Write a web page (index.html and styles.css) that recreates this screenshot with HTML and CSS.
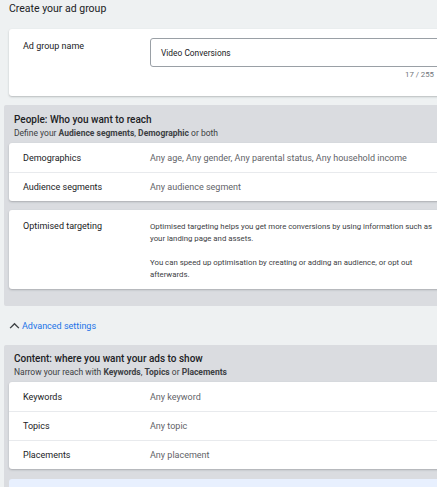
FILE: index.html
```html
<!DOCTYPE html>
<html>
<head>
<meta charset="utf-8">
<link rel="stylesheet" href="styles.css">
</head>
<body>
<div class="page">
  <h1 class="page-title">Create your ad group</h1>

  <div class="card name-card">
    <div class="label">Ad group name</div>
    <div class="field">
      <div class="input">Video Conversions</div>
      <div class="counter">17 / 255</div>
    </div>
  </div>

  <section class="panel people">
    <h2 class="panel-title">People: Who you want to reach</h2>
    <p class="panel-sub">Define your <b>Audience segments</b>, <b>Demographic</b> or both</p>
    <div class="card list">
      <div class="row"><div class="label">Demographics</div><div class="value">Any age, Any gender, Any parental status, Any household income</div></div>
      <div class="row"><div class="label">Audience segments</div><div class="value">Any audience segment</div></div>
    </div>
    <div class="card opt">
      <div class="label">Optimised targeting</div>
      <div class="desc">
        <p>Optimised targeting helps you get more conversions by using information such as your landing page and assets.</p>
        <p>You can speed up optimisation by creating or adding an audience, or opt out afterwards.</p>
      </div>
    </div>
  </section>

  <div class="advanced">
    <svg class="chev" viewBox="0 0 12 8" width="11" height="7"><path d="M1 7 L6 2 L11 7" fill="none" stroke="#3c4043" stroke-width="1.6"/></svg>
    <span>Advanced settings</span>
  </div>

  <section class="panel content">
    <h2 class="panel-title">Content: where you want your ads to show</h2>
    <p class="panel-sub">Narrow your reach with <b>Keywords</b>, <b>Topics</b> or <b>Placements</b></p>
    <div class="card list">
      <div class="row"><div class="label">Keywords</div><div class="value">Any keyword</div></div>
      <div class="row"><div class="label">Topics</div><div class="value">Any topic</div></div>
      <div class="row"><div class="label">Placements</div><div class="value">Any placement</div></div>
    </div>
    <div class="blue-box"></div>
  </section>
</div>
</body>
</html>
```

FILE: styles.css
```css
html, body {
  margin: 0;
  padding: 0;
  overflow: hidden;
  background: #eef1f2;
}
body {
  font-family: Roboto, "Noto Sans", sans-serif;
  color: #202124;
  font-size: 9px;
}
.page {
  width: 470px;
}
.page-title {
  margin: 0;
  padding: 2px 0 0 9px;
  height: 27px;
  box-sizing: border-box;
  font-size: 10.5px;
  line-height: 13px;
  font-weight: 400;
}
.card {
  background: #fff;
  border-radius: 3px;
  box-shadow: 0 1px 2px rgba(60,64,67,.3);
  margin-left: 9px;
}
.name-card {
  display: flex;
  height: 67px;
  margin-top: 2px;
  box-sizing: border-box;
  padding: 9px 0 0 14px;
}
.name-card .label {
  width: 127px;
  padding-top: 3px;
  line-height: 11px;
}
.field {
  width: 290px;
}
.input {
  height: 29px;
  box-sizing: border-box;
  border: 1px solid #9aa0a6;
  border-radius: 3px;
  padding: 1px 10px 0;
  font-size: 8.4px;
  line-height: 27px;
}
.counter {
  text-align: right;
  color: #70757a;
  font-size: 7.8px;
  line-height: 10px;
  margin-top: 3px;
  padding-right: 6px;
}
.panel {
  background: #dadce0;
  margin-left: 4px;
  border-radius: 2px;
}
.people {
  margin-top: 9px;
  padding: 8px 0 17px;
}
.panel-title {
  margin: 0 0 0 10px;
  font-size: 10px;
  line-height: 13px;
  font-weight: 500;
}
.panel-sub {
  margin: 2px 0 0 10px;
  font-size: 8.5px;
  line-height: 11px;
  color: #3c4043;
}
.panel-sub b { font-weight: 700; }
.list {
  margin-top: 4px;
  margin-left: 5px;
}
.row {
  display: flex;
  height: 29px;
  align-items: center;
  padding-left: 14px;
  border-top: 1px solid #e8eaed;
  box-sizing: border-box;
}
.row:first-child {
  border-top: none;
}
.row .label {
  width: 127px;
}
.value {
  color: #5f6368;
  white-space: nowrap;
}
.opt {
  margin-left: 5px;
  margin-top: 9px;
  display: flex;
  padding: 10px 0 0 14px;
  height: 79px;
  box-sizing: border-box;
}
.opt .label {
  width: 127px;
  line-height: 12px;
}
.desc {
  width: 285px;
  font-size: 7.8px;
  line-height: 12px;
  color: #3c4043;
  padding-top: 1px;
}
.desc p { margin: 0 0 12px; }
.advanced {
  height: 39px;
  display: flex;
  align-items: center;
  padding-left: 9px;
  color: #1a73e8;
  font-size: 9px;
}
.chev { margin-right: 2px; }
.content {
  padding: 7px 0 0;
  height: 150px;
  box-sizing: border-box;
}
.blue-box {
  margin: 10px 0 0 5px;
  height: 40px;
  background: #e8f0fe;
  border-radius: 3px;
}
```
